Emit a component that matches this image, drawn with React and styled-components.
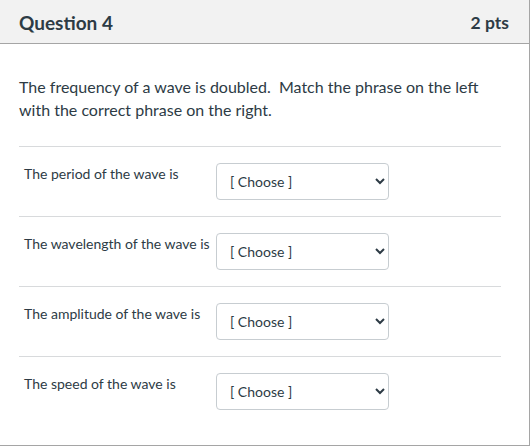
import styled, { createGlobalStyle } from "styled-components";

const GlobalStyle = createGlobalStyle`
  html, body {
    margin: 0;
    padding: 0;
    background: #ffffff;
  }
  body {
    font-family: Lato, "Noto Sans", "Liberation Sans", sans-serif;
    color: #2d3b45;
  }
`;

const MATCHES = [
  "The period of the wave is",
  "The wavelength of the wave is",
  "The amplitude of the wave is",
  "The speed of the wave is",
];

export default function App() {
  return (
    <>
      <GlobalStyle />
      <Card>
        <Header>
          <Title>Question 4</Title>
          <Points>2 pts</Points>
        </Header>
        <Body>
          <QuestionText>
            The frequency of a wave is doubled.&nbsp; Match the phrase on the
            left with the correct phrase on the right.
          </QuestionText>
          <Answers>
            {MATCHES.map((label) => (
              <AnswerRow key={label}>
                <AnswerLabel>{label}</AnswerLabel>
                <ChooseSelect defaultValue="">
                  <option value="">[ Choose ]</option>
                </ChooseSelect>
              </AnswerRow>
            ))}
          </Answers>
        </Body>
      </Card>
    </>
  );
}

const Card = styled.section`
  width: 531px;
  min-height: 447px;
  box-sizing: border-box;
  margin: -1px 0 0 -1px;
  border: 1px solid #a5a5a5;
  background: #ffffff;
`;

const Header = styled.header`
  display: flex;
  align-items: center;
  justify-content: space-between;
  height: 44px;
  box-sizing: border-box;
  padding: 2px 20px 0 19px;
  background: #f2f2f2;
  border-bottom: 1px solid #a5a5a5;
`;

const Title = styled.h2`
  margin: 0;
  font-size: 19px;
  font-weight: 700;
  color: #2d3b45;
`;

const Points = styled.span`
  font-size: 17.5px;
  font-weight: 700;
  color: #2d3b45;
`;

const Body = styled.div`
  padding: 31px 28px 0 19px;
`;

const QuestionText = styled.p`
  margin: 0 0 25px;
  font-size: 16px;
  line-height: 23px;
`;

const Answers = styled.div`
  display: grid;
  border-top: 1px solid #d8dadc;
`;

const AnswerRow = styled.div`
  display: flex;
  align-items: flex-start;
  padding: 16px 0 16px 5px;
  border-bottom: 1px solid #d8dadc;

  &:last-child {
    border-bottom: none;
  }
`;

const AnswerLabel = styled.div`
  width: 192px;
  padding-top: 2px;
  font-size: 14px;
  line-height: 18px;
`;

const ChooseSelect = styled.select`
  width: 173px;
  height: 37px;
  box-sizing: border-box;
  padding: 0 6px 0 9px;
  margin-top: 0;
  font-family: Lato, "Noto Sans", "Liberation Sans", sans-serif;
  font-size: 14px;
  color: #2d3b45;
  background: #ffffff;
  border: 1px solid #c7cdd1;
  border-radius: 4px;
`;
